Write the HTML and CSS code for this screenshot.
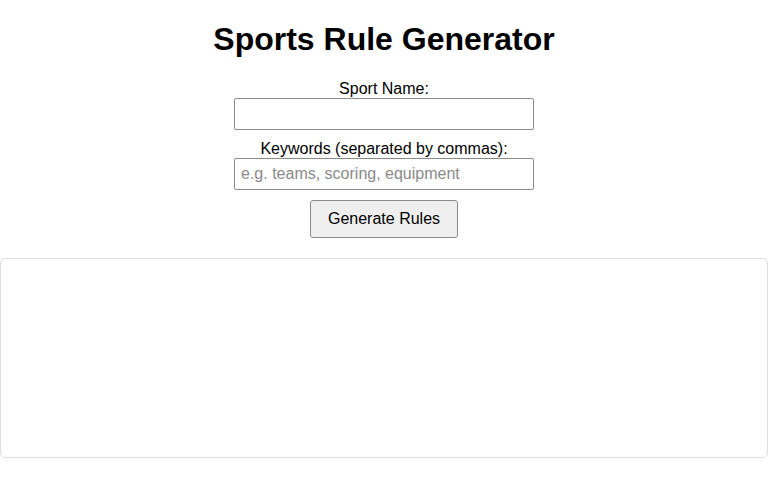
FILE: index.html
```html
<!DOCTYPE html>
<html lang="en">
<head>
    <meta charset="UTF-8">
    <meta name="viewport" content="width=device-width, initial-scale=1.0">
    <title>Sports Rule Generator</title>
    <link rel="stylesheet" href="styles.css">
</head>
<body>
    <h1>Sports Rule Generator</h1>
    <form id="ruleForm" class="rule-form">
        <label for="sportName">Sport Name:</label>
        <input type="text" id="sportName" name="sportName">

        <label for="keywords">Keywords (separated by commas):</label>
        <input type="text" id="keywords" name="keywords" placeholder="e.g. teams, scoring, equipment">

        <button type="submit">Generate Rules</button>
    </form>
    <div class="rules-output" id="rulesOutput"></div>
</body>
</html>
```

FILE: styles.css
```css
body {
    font-family: "Liberation Sans", Arial, sans-serif;
    margin: 0;
    padding: 0;
    color: #000;
    background: #fff;
}

h1 {
    text-align: center;
    font-size: 32px;
    margin: 21px 0 22px;
}

.rule-form {
    display: flex;
    flex-direction: column;
    align-items: center;
}

label {
    display: block;
    font-size: 16px;
    line-height: 18px;
}

input {
    width: 300px;
    height: 32px;
    padding: 0 6px;
    margin: 0 0 10px;
    border: 1px solid #8a8a8a;
    border-radius: 2px;
    font-family: inherit;
    font-size: 16px;
    box-sizing: border-box;
}

input::placeholder {
    color: #8a8a8a;
}

button {
    width: 148px;
    height: 38px;
    margin-top: 0;
    font-family: inherit;
    font-size: 16px;
    background-color: #efefef;
    border: 1px solid #8a8a8a;
    border-radius: 3px;
    color: #000;
    cursor: pointer;
}

.rules-output {
    margin-top: 20px;
    height: 200px;
    border: 1px solid #ddd;
    border-radius: 5px;
    box-sizing: border-box;
}
```
